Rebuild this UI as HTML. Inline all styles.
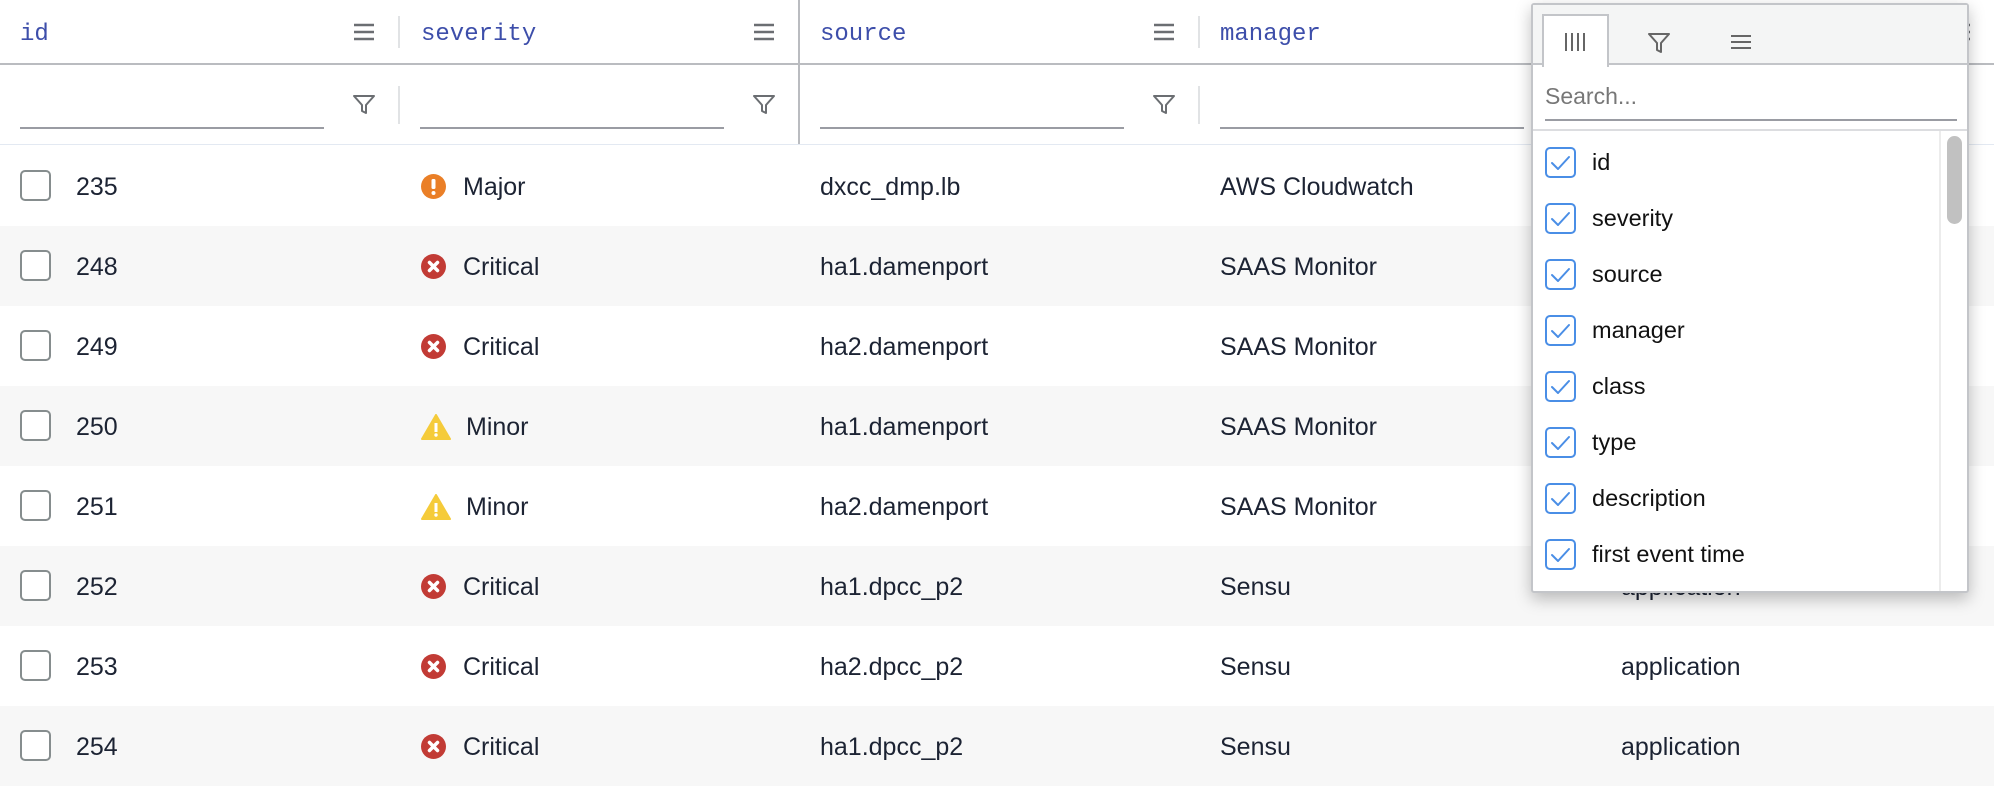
<!DOCTYPE html>
<html><head><meta charset="utf-8"><style>
*{box-sizing:border-box;margin:0;padding:0}
body{width:1994px;height:782px;overflow:hidden;background:#fff;font-family:"Liberation Sans",sans-serif;position:relative;color:#1c2333}
.a{position:absolute}
.h{font-family:"Liberation Mono",monospace;font-size:24px;color:#3d4eaa;top:21px}
.row{position:absolute;left:0;width:1994px;height:80px}
.row.g{background:#f7f7f7}
.t{position:absolute;top:26px;font-size:25px;line-height:30px}
.cb{position:absolute;left:20px;top:24px;width:31px;height:31px;border:2px solid #868d8e;border-radius:5px;background:#fff}
.ic{position:absolute;left:421px;top:28px}
.pi{position:absolute;left:1545px;width:31px;height:31px;border:2px solid #4a8ee6;border-radius:5px}
.pt{position:absolute;left:1592px;font-size:23.5px;color:#111}
</style></head><body>
<div class="a h" style="left:20px">id</div>
<div class="a h" style="left:421px">severity</div>
<div class="a h" style="left:820px">source</div>
<div class="a h" style="left:1220px">manager</div>
<svg class="a" style="left:0;top:0" width="1994" height="145">
<g stroke="#6b6e72" stroke-width="2.5">
<path d="M354 25h20M354 32h20M354 39h20"/>
<path d="M754 25h20M754 32h20M754 39h20"/>
<path d="M1154 25h20M1154 32h20M1154 39h20"/>
<path d="M1964 25h6M1964 32h6M1964 39h6"/>
</g>
<g stroke="#6b6e72" stroke-width="2" fill="none" stroke-linejoin="round">
<path d="M354 96h20l-8 9v8l-4 -2v-6z"/>
<path d="M754 96h20l-8 9v8l-4 -2v-6z"/>
<path d="M1154 96h20l-8 9v8l-4 -2v-6z"/>
</g>
<g fill="#e1e3e5"><rect x="398" y="16" width="2" height="32"/><rect x="1198" y="16" width="2" height="32"/>
<rect x="398" y="86" width="2" height="38"/><rect x="1198" y="86" width="2" height="38"/></g>
<rect x="798" y="0" width="2" height="145" fill="#babcc0"/>
<rect x="0" y="63" width="1994" height="2" fill="#babcc0"/>
<rect x="0" y="144" width="1994" height="2" fill="#e3e9f2"/>
<g fill="#9a9ca3"><rect x="20" y="127" width="304" height="2"/><rect x="420" y="127" width="304" height="2"/><rect x="820" y="127" width="304" height="2"/><rect x="1220" y="127" width="304" height="2"/></g>
</svg>

<div class="row" style="top:146px"><div class="cb"></div><div class="t" style="left:76px">235</div>
<svg class="ic" width="25" height="25"><circle cx="12.5" cy="12.5" r="12.5" fill="#ea7f27"/><rect x="10.5" y="5" width="4" height="10" rx="1.5" fill="#fff"/><circle cx="12.5" cy="19" r="2" fill="#fff"/></svg>
<div class="t" style="left:463px">Major</div><div class="t" style="left:820px">dxcc_dmp.lb</div><div class="t" style="left:1220px">AWS Cloudwatch</div></div>

<div class="row g" style="top:226px"><div class="cb"></div><div class="t" style="left:76px">248</div>
<svg class="ic" width="25" height="25"><circle cx="12.5" cy="12.5" r="12.5" fill="#c23b35"/><path d="M8.5 8.5l8 8M16.5 8.5l-8 8" stroke="#fff" stroke-width="3.5" stroke-linecap="round"/></svg>
<div class="t" style="left:463px">Critical</div><div class="t" style="left:820px">ha1.damenport</div><div class="t" style="left:1220px">SAAS Monitor</div></div>

<div class="row" style="top:306px"><div class="cb"></div><div class="t" style="left:76px">249</div>
<svg class="ic" width="25" height="25"><circle cx="12.5" cy="12.5" r="12.5" fill="#c23b35"/><path d="M8.5 8.5l8 8M16.5 8.5l-8 8" stroke="#fff" stroke-width="3.5" stroke-linecap="round"/></svg>
<div class="t" style="left:463px">Critical</div><div class="t" style="left:820px">ha2.damenport</div><div class="t" style="left:1220px">SAAS Monitor</div></div>

<div class="row g" style="top:386px"><div class="cb"></div><div class="t" style="left:76px">250</div>
<svg class="ic" width="30" height="26"><path d="M15 1L29 25H1z" fill="#f5cb3a" stroke="#f5cb3a" stroke-width="2" stroke-linejoin="round"/><rect x="13.5" y="9" width="3" height="9" fill="#fff"/><circle cx="15" cy="21" r="1.7" fill="#fff"/></svg>
<div class="t" style="left:466px">Minor</div><div class="t" style="left:820px">ha1.damenport</div><div class="t" style="left:1220px">SAAS Monitor</div></div>

<div class="row" style="top:466px"><div class="cb"></div><div class="t" style="left:76px">251</div>
<svg class="ic" width="30" height="26"><path d="M15 1L29 25H1z" fill="#f5cb3a" stroke="#f5cb3a" stroke-width="2" stroke-linejoin="round"/><rect x="13.5" y="9" width="3" height="9" fill="#fff"/><circle cx="15" cy="21" r="1.7" fill="#fff"/></svg>
<div class="t" style="left:466px">Minor</div><div class="t" style="left:820px">ha2.damenport</div><div class="t" style="left:1220px">SAAS Monitor</div></div>

<div class="row g" style="top:546px"><div class="cb"></div><div class="t" style="left:76px">252</div>
<svg class="ic" width="25" height="25"><circle cx="12.5" cy="12.5" r="12.5" fill="#c23b35"/><path d="M8.5 8.5l8 8M16.5 8.5l-8 8" stroke="#fff" stroke-width="3.5" stroke-linecap="round"/></svg>
<div class="t" style="left:463px">Critical</div><div class="t" style="left:820px">ha1.dpcc_p2</div><div class="t" style="left:1220px">Sensu</div><div class="t" style="left:1621px">application</div></div>

<div class="row" style="top:626px"><div class="cb"></div><div class="t" style="left:76px">253</div>
<svg class="ic" width="25" height="25"><circle cx="12.5" cy="12.5" r="12.5" fill="#c23b35"/><path d="M8.5 8.5l8 8M16.5 8.5l-8 8" stroke="#fff" stroke-width="3.5" stroke-linecap="round"/></svg>
<div class="t" style="left:463px">Critical</div><div class="t" style="left:820px">ha2.dpcc_p2</div><div class="t" style="left:1220px">Sensu</div><div class="t" style="left:1621px">application</div></div>

<div class="row g" style="top:706px"><div class="cb"></div><div class="t" style="left:76px">254</div>
<svg class="ic" width="25" height="25"><circle cx="12.5" cy="12.5" r="12.5" fill="#c23b35"/><path d="M8.5 8.5l8 8M16.5 8.5l-8 8" stroke="#fff" stroke-width="3.5" stroke-linecap="round"/></svg>
<div class="t" style="left:463px">Critical</div><div class="t" style="left:820px">ha1.dpcc_p2</div><div class="t" style="left:1220px">Sensu</div><div class="t" style="left:1621px">application</div></div>

<div class="a" style="left:1531px;top:3px;width:438px;height:590px;background:#fff;border:2px solid #c3c5c9;border-radius:3px;box-shadow:0 6px 16px rgba(0,0,0,0.25)">
 <div class="a" style="left:0;top:0;width:434px;height:60px;background:#f4f5f5;border-bottom:2px solid #c3c5c9"></div>
 <div class="a" style="left:9px;top:9px;width:67px;height:53px;background:#fff;border:2px solid #c3c5c9;border-bottom:none"></div>
 <svg class="a" style="left:0;top:0" width="434" height="60">
  <g stroke="#666" stroke-width="2"><path d="M33 28v18M39 28v18M45 28v18M51 28v18"/></g>
  <path d="M116 29h20l-8 9v9l-4-2v-7z" stroke="#666" stroke-width="2" fill="none" stroke-linejoin="round"/>
  <g stroke="#666" stroke-width="2"><path d="M198 31h20M198 37h20M198 43h20"/></g>
 </svg>
 <div class="a" style="left:12px;top:78px;font-size:23px;color:#777">Search...</div>
 <div class="a" style="left:12px;top:114px;width:412px;height:2px;background:#9a9ca3"></div>
 <div class="a" style="left:0;top:124px;width:434px;height:2px;background:#dcdde0"></div>
 <div class="a" style="left:406px;top:126px;width:2px;height:460px;background:#ececec"></div>
 <div class="a" style="left:414px;top:131px;width:15px;height:88px;background:#c1c1c1;border-radius:8px"></div>
</div>
<svg class="a" style="left:0;top:0" width="1994" height="782" pointer-events="none">
 <g fill="none" stroke="#4a8ee6" stroke-width="2" stroke-linecap="round" stroke-linejoin="round">
  <path d="M1552 163l6 6 11-12"/><path d="M1552 219l6 6 11-12"/><path d="M1552 275l6 6 11-12"/><path d="M1552 331l6 6 11-12"/>
  <path d="M1552 387l6 6 11-12"/><path d="M1552 443l6 6 11-12"/><path d="M1552 499l6 6 11-12"/><path d="M1552 555l6 6 11-12"/>
 </g>
</svg>
<div class="pi" style="top:147px"></div><div class="pt" style="top:149px">id</div>
<div class="pi" style="top:203px"></div><div class="pt" style="top:205px">severity</div>
<div class="pi" style="top:259px"></div><div class="pt" style="top:261px">source</div>
<div class="pi" style="top:315px"></div><div class="pt" style="top:317px">manager</div>
<div class="pi" style="top:371px"></div><div class="pt" style="top:373px">class</div>
<div class="pi" style="top:427px"></div><div class="pt" style="top:429px">type</div>
<div class="pi" style="top:483px"></div><div class="pt" style="top:485px">description</div>
<div class="pi" style="top:539px"></div><div class="pt" style="top:541px">first event time</div>
</body></html>
